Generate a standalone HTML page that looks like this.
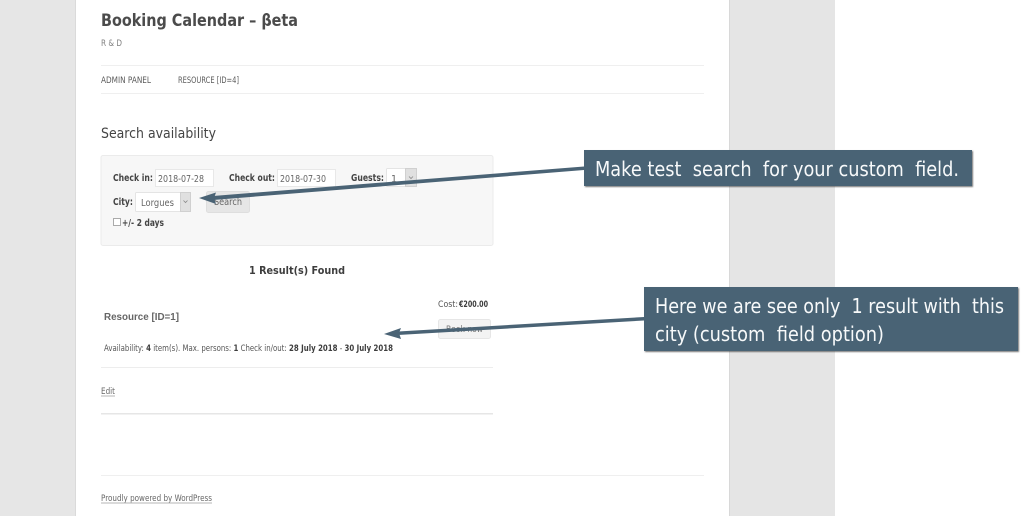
<!DOCTYPE html>
<html><head><meta charset="utf-8"><style>
html,body{margin:0;padding:0;width:1024px;height:516px;overflow:hidden;background:#fff}
svg{display:block}
text{font-family:"DejaVu Sans",sans-serif}
.l{font-family:"Liberation Sans",sans-serif}
</style></head><body>
<svg width="1024" height="516" viewBox="0 0 1024 516" xmlns="http://www.w3.org/2000/svg">
<defs>
<filter id="b" x="-2%" y="-2%" width="104%" height="104%"><feGaussianBlur stdDeviation="0.3"/></filter>
<filter id="t" x="-2%" y="-10%" width="104%" height="120%"><feGaussianBlur stdDeviation="0.2"/></filter>
<filter id="sh" x="-5%" y="-20%" width="110%" height="140%"><feDropShadow dx="1" dy="1" stdDeviation="0.7" flood-color="#555" flood-opacity=".8"/></filter>
</defs>
<rect width="1024" height="516" fill="#fff"/>
<rect x="0" y="0" width="75" height="516" fill="#e6e6e6"/>
<rect x="729" y="0" width="106" height="516" fill="#e5e5e5"/>
<rect x="75" y="0" width="1" height="516" fill="#dadada"/>
<rect x="729" y="0" width="1" height="516" fill="#d8d8d8"/>
<g filter="url(#b)">
<text x="101" y="26" font-size="17" font-weight="700" fill="#4c4c4c" textLength="197" lengthAdjust="spacingAndGlyphs">Booking Calendar – βeta</text>
<text x="101" y="46" font-size="8.5" fill="#808080" textLength="21" lengthAdjust="spacingAndGlyphs">R &amp; D</text>
<rect x="101" y="65" width="603" height="1" fill="#efefef"/>
<rect x="101" y="93" width="603" height="1" fill="#efefef"/>
<text x="101" y="83" font-size="8.5" fill="#5a5a5a" textLength="50" lengthAdjust="spacingAndGlyphs">ADMIN PANEL</text>
<text x="178" y="83" font-size="8.5" fill="#5a5a5a" textLength="61" lengthAdjust="spacingAndGlyphs">RESOURCE [ID=4]</text>
<text x="101" y="138" font-size="14.5" fill="#444" textLength="115" lengthAdjust="spacingAndGlyphs">Search availability</text>

<rect x="101" y="155.5" width="392" height="90" rx="2" fill="#f7f7f7" stroke="#ebebeb"/>
<text x="113" y="181" font-size="9.5" font-weight="700" fill="#444" textLength="40" lengthAdjust="spacingAndGlyphs">Check in:</text>
<rect x="155.5" y="169.5" width="58" height="17" fill="#fff" stroke="#e8e8e8"/>
<text x="158" y="182" font-size="9.5" fill="#666" textLength="46" lengthAdjust="spacingAndGlyphs">2018-07-28</text>
<text x="229" y="181" font-size="9.5" font-weight="700" fill="#444" textLength="46" lengthAdjust="spacingAndGlyphs">Check out:</text>
<rect x="277.5" y="169.5" width="58" height="17" fill="#fff" stroke="#e8e8e8"/>
<text x="280" y="182" font-size="9.5" fill="#666" textLength="46" lengthAdjust="spacingAndGlyphs">2018-07-30</text>
<text x="351" y="181" font-size="9.5" font-weight="700" fill="#444" textLength="33" lengthAdjust="spacingAndGlyphs">Guests:</text>
<rect x="386.5" y="168.5" width="30" height="18" rx="1" fill="#fff" stroke="#e4e4e4"/>
<rect x="405.5" y="168.5" width="11" height="18" fill="#e0e0e0" stroke="#d0d0d0"/>
<path d="M409 176.5l2 2 2-2" fill="none" stroke="#888" stroke-width=".8"/>
<text x="391" y="182" font-size="9.5" fill="#666">1</text>

<text x="113" y="205" font-size="9.5" font-weight="700" fill="#444" textLength="20" lengthAdjust="spacingAndGlyphs">City:</text>
<rect x="135.5" y="192.5" width="55" height="19" rx="1" fill="#fff" stroke="#e4e4e4"/>
<rect x="180.5" y="192.5" width="10" height="19" fill="#e0e0e0" stroke="#d0d0d0"/>
<path d="M183.5 200.5l2 2 2-2" fill="none" stroke="#888" stroke-width=".8"/>
<text x="141" y="206" font-size="9.5" fill="#666" textLength="33" lengthAdjust="spacingAndGlyphs">Lorgues</text>
<rect x="206.5" y="191.5" width="43" height="21" rx="2" fill="#e6e6e6" stroke="#dedede"/>
<text x="214" y="205" font-size="9.5" fill="#666" textLength="28" lengthAdjust="spacingAndGlyphs">Search</text>
<rect x="113.5" y="218.5" width="7" height="7" fill="#fff" stroke="#aaa"/>
<text x="122" y="226" font-size="9.5" font-weight="700" fill="#444" textLength="42" lengthAdjust="spacingAndGlyphs">+/- 2 days</text>

<text x="249" y="274" font-size="11" font-weight="700" fill="#3c3c3c" textLength="96" lengthAdjust="spacingAndGlyphs">1 Result(s) Found</text>
<text x="438" y="307" font-size="8.5" fill="#555" textLength="20" lengthAdjust="spacingAndGlyphs">Cost:</text>
<text x="459" y="307" font-size="8.5" font-weight="700" fill="#3c3c3c" textLength="29" lengthAdjust="spacingAndGlyphs">€200.00</text>
<text class="l" x="104" y="320" font-size="10.5" font-weight="700" fill="#666" textLength="75" lengthAdjust="spacingAndGlyphs">Resource [ID=1]</text>
<rect x="438.5" y="319.5" width="52" height="19" rx="2" fill="#f3f3f3" stroke="#e6e6e6"/>
<text x="446" y="332" font-size="9" fill="#777" textLength="37" lengthAdjust="spacingAndGlyphs">Book now</text>
<text x="104" y="351" font-size="8.5" fill="#555" textLength="289" lengthAdjust="spacingAndGlyphs">Availability: <tspan font-weight="700" fill="#3c3c3c">4</tspan> item(s). Max. persons: <tspan font-weight="700" fill="#3c3c3c">1</tspan> Check in/out: <tspan font-weight="700" fill="#3c3c3c">28 July 2018</tspan> - <tspan font-weight="700" fill="#3c3c3c">30 July 2018</tspan></text>
<rect x="101" y="367" width="392" height="1" fill="#ededed"/>
<text x="101" y="394" font-size="8.5" fill="#666" textLength="14" lengthAdjust="spacingAndGlyphs">Edit</text>
<rect x="101" y="395.5" width="14" height="1" fill="#b5b5b5"/>
<rect x="101" y="413" width="392" height="1.5" fill="#e6e6e6"/>
<rect x="101" y="475" width="603" height="1" fill="#efefef"/>
<text x="101" y="501" font-size="8.5" fill="#666" textLength="111" lengthAdjust="spacingAndGlyphs">Proudly powered by WordPress</text>
<rect x="101" y="502.5" width="111" height="1" fill="#b5b5b5"/>
</g>

<!-- arrows -->
<path d="M584 166.5 L213 196 L213 200 L584 170Z" fill="#4a6375"/>
<path d="M199 198 L216 192.5 L214 198 L216 204Z" fill="#4a6375"/>
<path d="M644 317 L398 331.5 L398 335 L644 320.5Z" fill="#4a6375"/>
<path d="M384 334 L401 328 L399 333 L401 339Z" fill="#4a6375"/>

<!-- callouts -->
<rect x="584" y="150" width="388" height="36" fill="#4a6375" filter="url(#sh)"/>
<g filter="url(#t)">
<text x="595" y="176" font-size="20" fill="#f7f9fa" textLength="364" xml:space="preserve" lengthAdjust="spacingAndGlyphs">Make test  search  for your custom  field.</text>
</g>
<rect x="644" y="287" width="374" height="64" fill="#4a6375" filter="url(#sh)"/>
<g filter="url(#t)">
<text x="655" y="313" font-size="20" fill="#f7f9fa" textLength="349" xml:space="preserve" lengthAdjust="spacingAndGlyphs">Here we are see only  1 result with  this</text>
<text x="655" y="341" font-size="20" fill="#f7f9fa" textLength="229" xml:space="preserve" lengthAdjust="spacingAndGlyphs">city (custom  field option)</text>
</g>
</svg>
</body></html>
